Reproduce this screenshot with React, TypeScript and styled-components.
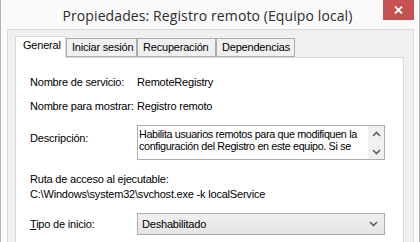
import React from 'react';
import styled, {createGlobalStyle} from 'styled-components';

const GlobalStyle = createGlobalStyle`
    html, body {
        margin: 0;
        padding: 0;
        background: #fafafa;
    }
    body {
        width: 420px;
        height: 242px;
        overflow: hidden;
    }
`;

const Window = styled.div`
    width: 420px;
    height: 242px;
    box-sizing: border-box;
    border-left: 1px solid #b4b4b4;
    border-right: 1px solid #b4b4b4;
    background: #fafafa;
    display: flex;
    flex-direction: column;
    overflow: hidden;
`;

const TitleBar = styled.div`
    height: 29px;
    flex: none;
    display: grid;
    grid-template-columns: 1fr auto 1fr;
    padding-right: 5px;
`;

const Title = styled.div`
    grid-column: 2;
    font-family: 'Open Sans', 'Noto Sans', sans-serif;
    font-size: 14px;
    letter-spacing: 0.1px;
    line-height: 29px;
    color: #2b2b2b;
    white-space: nowrap;
    padding-top: 1px;
`;

const CloseButton = styled.div`
    grid-column: 3;
    justify-self: end;
    width: 31px;
    height: 20px;
    background: #c75050;
    display: flex;
    align-items: center;
    justify-content: center;
`;

const Body = styled.div`
    flex: 1;
    margin: 0 5px 0 6px;
    background: #f0f0f0;
    border: 1px solid #d9d9d9;
    border-bottom: none;
    padding: 6px 9px 0 7px;
    display: flex;
    flex-direction: column;
    font-family: 'Liberation Sans', Arial, sans-serif;
    font-size: 11px;
    letter-spacing: -0.2px;
    color: #000;
`;

const TabStrip = styled.div`
    display: flex;
    align-items: flex-end;
    height: 21px;
    position: relative;
    z-index: 1;
`;

const Tab = styled.div<{$active?: boolean; $width: number}>`
    box-sizing: border-box;
    width: ${p => p.$width}px;
    height: ${p => (p.$active ? 22 : 19)}px;
    margin-bottom: ${p => (p.$active ? -1 : 0)}px;
    background: ${p => (p.$active ? '#fff' : '#f0f0f0')};
    border: 1px solid ${p => (p.$active ? '#d9d9d9' : '#acacac')};
    border-bottom: ${p => (p.$active ? 'none' : '1px solid #acacac')};
    padding-left: ${p => (p.$active ? 7 : 5)}px;
    line-height: ${p => (p.$active ? 17 : 16)}px;
    white-space: nowrap;
`;

const Panel = styled.div`
    flex: 1;
    background: #fff;
    border: 1px solid #d9d9d9;
    border-bottom: none;
    padding: 18px 0 0 14px;
    display: flex;
    flex-direction: column;
`;

const Row = styled.div<{$gap: number; $align?: string}>`
    display: grid;
    grid-template-columns: 107px 248px;
    align-items: ${p => p.$align ?? 'center'};
    margin-top: ${p => p.$gap}px;
    line-height: 13px;
`;

const Label = styled.div<{$offset?: number}>`
    margin-top: ${p => p.$offset ?? 0}px;
    white-space: nowrap;
`;

const Value = styled.div`
    white-space: nowrap;
`;

const Line = styled.div<{$gap: number}>`
    margin-top: ${p => p.$gap}px;
    line-height: 13px;
    white-space: nowrap;
`;

const TextBox = styled.div`
    box-sizing: border-box;
    height: 35px;
    border: 1px solid #abadb3;
    display: flex;
`;

const TextBoxText = styled.div`
    flex: 1;
    padding: 2px 0 0 1px;
    line-height: 12px;
    font-size: 10.8px;
    letter-spacing: -0.35px;
    white-space: nowrap;
    overflow: hidden;
`;

const ScrollBar = styled.div`
    width: 16px;
    background: #f0f0f0;
    display: flex;
    flex-direction: column;
    align-items: center;
    justify-content: space-between;
    padding: 5px 0 4px;
`;

const Select = styled.div`
    box-sizing: border-box;
    height: 22px;
    border: 1px solid #acacac;
    background: linear-gradient(#f0f0f0, #e5e5e5);
    display: flex;
    align-items: center;
    padding: 0 6px 0 4px;
    justify-content: space-between;
`;

const Chevron = ({up}: {up?: boolean}) => (
    <svg
        width='9'
        height='6'
        viewBox='0 0 9 6'
    >
        <path
            d={up ? 'M1 5 L4.5 1.5 L8 5' : 'M1 1 L4.5 4.5 L8 1'}
            fill='none'
            stroke='#606060'
            strokeWidth='1.6'
        />
    </svg>
);

const tabs = [
    {label: 'General', width: 51, active: true},
    {label: 'Iniciar sesión', width: 71},
    {label: 'Recuperación', width: 79},
    {label: 'Dependencias', width: 79},
];

export default function App() {
    return (
        <Window>
            <GlobalStyle/>
            <TitleBar>
                <Title>{'Propiedades: Registro remoto (Equipo local)'}</Title>
                <CloseButton>
                    <svg
                        width='9'
                        height='8'
                        viewBox='0 0 9 8'
                    >
                        <path
                            d='M1 0.5 L8 7.5 M8 0.5 L1 7.5'
                            stroke='#fff'
                            strokeWidth='1.8'
                        />
                    </svg>
                </CloseButton>
            </TitleBar>
            <Body>
                <TabStrip>
                    {tabs.map((t) => (
                        <Tab
                            key={t.label}
                            $active={t.active}
                            $width={t.width}
                        >
                            {t.label}
                        </Tab>
                    ))}
                </TabStrip>
                <Panel>
                    <Row $gap={0}>
                        <Label>{'Nombre de servicio:'}</Label>
                        <Value>{'RemoteRegistry'}</Value>
                    </Row>
                    <Row $gap={11}>
                        <Label>{'Nombre para mostrar:'}</Label>
                        <Value>{'Registro remoto'}</Value>
                    </Row>
                    <Row
                        $gap={12}
                        $align='start'
                    >
                        <Label $offset={7}>{'Descripción:'}</Label>
                        <TextBox>
                            <TextBoxText>
                                {'Habilita usuarios remotos para que modifiquen la'}
                                <br/>
                                {'configuración del Registro en este equipo. Si se'}
                            </TextBoxText>
                            <ScrollBar>
                                <Chevron up={true}/>
                                <Chevron/>
                            </ScrollBar>
                        </TextBox>
                    </Row>
                    <Line $gap={13}>{'Ruta de acceso al ejecutable:'}</Line>
                    <Line $gap={2}>{'C:\\Windows\\system32\\svchost.exe -k localService'}</Line>
                    <Row $gap={12}>
                        <Label><u>{'T'}</u>{'ipo de inicio:'}</Label>
                        <Select>
                            <span>{'Deshabilitado'}</span>
                            <Chevron/>
                        </Select>
                    </Row>
                </Panel>
            </Body>
        </Window>
    );
}
